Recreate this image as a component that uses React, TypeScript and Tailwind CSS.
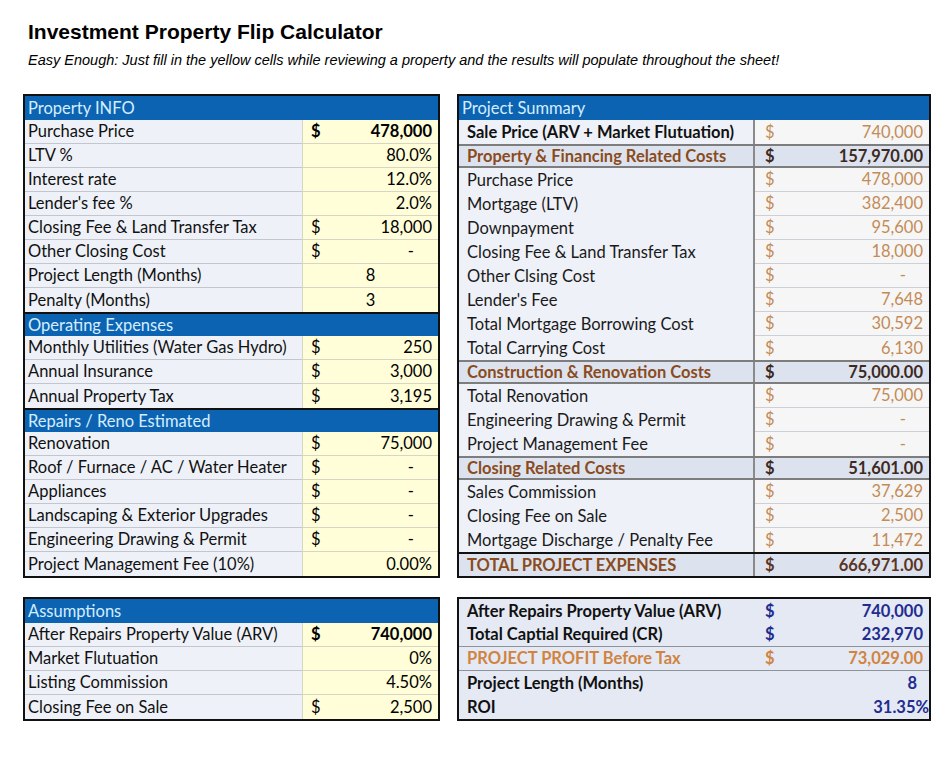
import React from 'react';

type LeftRow =
  | { kind: 'head'; label: string; first?: boolean }
  | { kind: 'row'; label: string; cur?: boolean; val: string; bold?: boolean; center?: boolean; dash?: boolean; last?: boolean };

type RightRow = {
  kind: 'head' | 'sale' | 'normal' | 'section' | 'total';
  label: string;
  val?: string;
};

const propertyRows: LeftRow[] = [
  { kind: 'head', label: 'Property INFO', first: true },
  { kind: 'row', label: 'Purchase Price', cur: true, val: '478,000', bold: true },
  { kind: 'row', label: 'LTV %', val: '80.0%' },
  { kind: 'row', label: 'Interest rate', val: '12.0%' },
  { kind: 'row', label: "Lender's fee %", val: '2.0%' },
  { kind: 'row', label: 'Closing Fee & Land Transfer Tax', cur: true, val: '18,000' },
  { kind: 'row', label: 'Other Closing Cost', cur: true, val: '-', dash: true },
  { kind: 'row', label: 'Project Length (Months)', val: '8', center: true },
  { kind: 'row', label: 'Penalty (Months)', val: '3', center: true, last: true },
  { kind: 'head', label: 'Operating Expenses' },
  { kind: 'row', label: 'Monthly Utilities (Water Gas Hydro)', cur: true, val: '250' },
  { kind: 'row', label: 'Annual Insurance', cur: true, val: '3,000' },
  { kind: 'row', label: 'Annual Property Tax', cur: true, val: '3,195', last: true },
  { kind: 'head', label: 'Repairs / Reno Estimated' },
  { kind: 'row', label: 'Renovation', cur: true, val: '75,000' },
  { kind: 'row', label: 'Roof / Furnace / AC / Water Heater', cur: true, val: '-', dash: true },
  { kind: 'row', label: 'Appliances', cur: true, val: '-', dash: true },
  { kind: 'row', label: 'Landscaping & Exterior Upgrades', cur: true, val: '-', dash: true },
  { kind: 'row', label: 'Engineering Drawing & Permit', cur: true, val: '-', dash: true },
  { kind: 'row', label: 'Project Management Fee (10%)', val: '0.00%', last: true },
];

const assumptionRows: LeftRow[] = [
  { kind: 'head', label: 'Assumptions', first: true },
  { kind: 'row', label: 'After Repairs Property Value (ARV)', cur: true, val: '740,000', bold: true },
  { kind: 'row', label: 'Market Flutuation', val: '0%' },
  { kind: 'row', label: 'Listing Commission', val: '4.50%' },
  { kind: 'row', label: 'Closing Fee on Sale', cur: true, val: '2,500', last: true },
];

const summaryRows: RightRow[] = [
  { kind: 'head', label: 'Project Summary' },
  { kind: 'sale', label: 'Sale Price (ARV + Market Flutuation)', val: '740,000' },
  { kind: 'section', label: 'Property & Financing Related Costs', val: '157,970.00' },
  { kind: 'normal', label: 'Purchase Price', val: '478,000' },
  { kind: 'normal', label: 'Mortgage (LTV)', val: '382,400' },
  { kind: 'normal', label: 'Downpayment', val: '95,600' },
  { kind: 'normal', label: 'Closing Fee & Land Transfer Tax', val: '18,000' },
  { kind: 'normal', label: 'Other Clsing Cost', val: '-' },
  { kind: 'normal', label: "Lender's Fee", val: '7,648' },
  { kind: 'normal', label: 'Total Mortgage Borrowing Cost', val: '30,592' },
  { kind: 'normal', label: 'Total Carrying Cost', val: '6,130' },
  { kind: 'section', label: 'Construction & Renovation Costs', val: '75,000.00' },
  { kind: 'normal', label: 'Total Renovation', val: '75,000' },
  { kind: 'normal', label: 'Engineering Drawing & Permit', val: '-' },
  { kind: 'normal', label: 'Project Management Fee', val: '-' },
  { kind: 'section', label: 'Closing Related Costs', val: '51,601.00' },
  { kind: 'normal', label: 'Sales Commission', val: '37,629' },
  { kind: 'normal', label: 'Closing Fee on Sale', val: '2,500' },
  { kind: 'normal', label: 'Mortgage Discharge / Penalty Fee', val: '11,472' },
  { kind: 'total', label: 'TOTAL PROJECT EXPENSES', val: '666,971.00' },
];

function LeftTable({ rows }: { rows: LeftRow[] }) {
  return (
    <div className="border-2 border-[#111] w-[417px]">
      {rows.map((r, i) =>
        r.kind === 'head' ? (
          <div
            key={i}
            className={`h-6 flex items-center pl-[3px] bg-[#0c63b2] text-[#d4eeff] ${r.first ? '' : 'border-t-2 border-[#111]'}`}
          >
            {r.label}
          </div>
        ) : (
          <div key={i} className="h-6 grid grid-cols-[277px_1fr]">
            <div className={`flex items-center pl-[3px] bg-[#eef1f8] text-[#111] ${r.last ? '' : 'border-b border-[#c3c6cc]'}`}>
              {r.label}
            </div>
            <div
              className={`relative flex items-center bg-[#fffed9] border-l border-[#d6d6c8] ${r.last ? '' : 'border-b border-[#d2d2c4]'} ${r.bold ? 'font-bold' : ''}`}
            >
              {r.cur && <span className="absolute left-[8px]">$</span>}
              {r.center ? (
                <span className="w-full text-center">{r.val}</span>
              ) : (
                <span className={`ml-auto ${r.dash ? 'pr-[24px]' : 'pr-[6px]'}`}>{r.val}</span>
              )}
            </div>
          </div>
        ),
      )}
    </div>
  );
}

function SummaryTable() {
  return (
    <div className="border-2 border-[#111] w-[474px]">
      {summaryRows.map((r, i) => {
        if (r.kind === 'head') {
          return (
            <div key={i} className="h-6 flex items-center pl-[3px] bg-[#0c63b2] text-[#d4eeff]">
              {r.label}
            </div>
          );
        }
        if (r.kind === 'section' || r.kind === 'total') {
          const border = r.kind === 'total' ? 'border-t-2 border-[#111]' : 'border-y-2 border-[#7d7d7d]';
          return (
            <div key={i} className={`h-6 grid grid-cols-[296px_1fr] bg-[#dde3ee] font-bold ${border}`}>
              <div className="flex items-center pl-[8px] text-[#8a4b20] border-r-2 border-[#8a8a8a]">{r.label}</div>
              <div className={`flex items-center justify-between pl-[10px] pr-[6px] ${r.kind === 'total' ? 'text-[#5a3524]' : 'text-[#3d2a22]'}`}>
                <span>$</span>
                <span>{r.val}</span>
              </div>
            </div>
          );
        }
        const nextNormal = summaryRows[i + 1]?.kind === 'normal';
        return (
          <div key={i} className="h-6 grid grid-cols-[296px_1fr]">
            <div
              className={`flex items-center pl-[8px] bg-[#eef1f8] border-r-2 border-[#8a8a8a] ${r.kind === 'sale' ? 'font-bold text-[#111]' : 'text-[#1a1a1a]'}`}
            >
              {r.label}
            </div>
            <div
              className={`flex items-center justify-between pl-[10px] pr-[6px] bg-[#f6f6f6] text-[#c48b57] ${nextNormal ? 'border-b border-[#cdd0d6]' : ''}`}
            >
              <span>$</span>
              <span className={r.val === '-' ? 'pr-[17px]' : ''}>{r.val}</span>
            </div>
          </div>
        );
      })}
    </div>
  );
}

const resultRows = [
  { label: 'After Repairs Property Value (ARV)', cur: true, val: '740,000', tone: 'navy', line: false },
  { label: 'Total Captial Required (CR)', cur: true, val: '232,970', tone: 'navy', line: true },
  { label: 'PROJECT PROFIT Before Tax', cur: true, val: '73,029.00', tone: 'orange', line: true },
  { label: 'Project Length (Months)', cur: false, val: '8', tone: 'navy', line: false },
  { label: 'ROI', cur: false, val: '31.35%', tone: 'navy', line: false },
];

function ResultTable() {
  return (
    <div className="border-2 border-[#111] w-[474px] bg-[#e4e9f4] font-bold">
      {resultRows.map((r, i) => (
        <div key={i} className={`h-6 grid grid-cols-[296px_1fr] ${r.line ? 'border-b border-[#8f939a]' : ''}`}>
          <div className={`flex items-center pl-[8px] ${r.tone === 'orange' ? 'text-[#d0843f]' : 'text-[#111]'}`}>{r.label}</div>
          <div className={`flex items-center pl-[10px] ${r.tone === 'orange' ? 'text-[#d0843f]' : 'text-[#232c8e]'}`}>
            {r.cur && <span>$</span>}
            <span className={`ml-auto ${r.val === '8' ? 'pr-[12px]' : r.val === '31.35%' ? 'pr-0' : 'pr-[6px]'}`}>{r.val}</span>
          </div>
        </div>
      ))}
    </div>
  );
}

export default function App() {
  return (
    <div className="w-[951px] h-[761px] bg-white pt-[20px] pl-[23px]">
      <div className="pl-[5px] font-['Liberation_Sans',Arial,sans-serif] text-black">
        <h1 className="text-[21px] leading-[24px] font-bold">Investment Property Flip Calculator</h1>
        <p className="mt-[6px] text-[14.5px] leading-[20px] italic">
          Easy Enough: Just fill in the yellow cells while reviewing a property and the results will populate throughout the sheet!
        </p>
      </div>

      <div className="mt-[24px] font-[Lato,'Liberation_Sans',sans-serif] text-[16.5px] leading-none">
        <div className="flex gap-[17px] items-start">
          <LeftTable rows={propertyRows} />
          <SummaryTable />
        </div>
        <div className="flex gap-[17px] items-start mt-[19px]">
          <LeftTable rows={assumptionRows} />
          <ResultTable />
        </div>
      </div>
    </div>
  );
}
